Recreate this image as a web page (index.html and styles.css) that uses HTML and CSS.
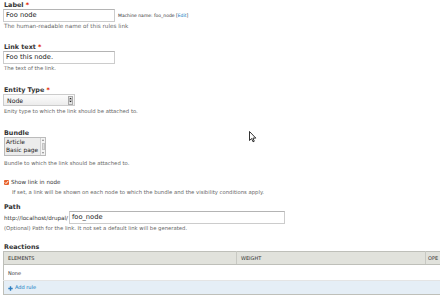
FILE: index.html
```html
<!DOCTYPE html>
<html>
<head>
<meta charset="utf-8">
<link rel="stylesheet" href="styles.css">
</head>
<body>
<div class="page">
  <div class="item item-label">
    <div class="label">Label <span class="req">*</span></div>
    <div class="row">
      <div class="input w-short">Foo node</div>
      <span class="machine">Machine name: foo_node [<a class="link">Edit</a>]</span>
    </div>
    <div class="desc desc-first">The human-readable name of this rules link</div>
  </div>

  <div class="item item-linktext">
    <div class="label">Link text <span class="req">*</span></div>
    <div class="input w-short">Foo this node.</div>
    <div class="desc">The text of the link.</div>
  </div>

  <div class="item item-entity">
    <div class="label">Entity Type <span class="req">*</span></div>
    <div class="select"><span class="select-val">Node</span><span class="select-btn"><svg width="4" height="8" viewBox="0 0 4 8"><path d="M0 3 L2 1 L4 3 Z M0 5 L4 5 L2 7 Z" fill="#222"/></svg></span></div>
    <div class="desc">Enity type to which the link should be attached to.</div>
  </div>

  <div class="item item-bundle">
    <div class="label">Bundle</div>
    <div class="listbox">
      <div class="options"><div>Article</div><div>Basic page</div></div>
      <div class="scroll"><span class="arr up"></span><span class="thumb"></span><span class="arr down"></span></div>
    </div>
    <div class="desc desc-bundle">Bundle to which the link should be attached to.</div>
  </div>

  <div class="item item-check">
    <div class="check-row"><span class="checkbox"><svg width="5" height="5" viewBox="0 0 5 5"><path d="M0.8 2.4 L2 3.6 L4.2 1" stroke="#fff" stroke-width="1" fill="none"/></svg></span><span class="check-label">Show link in node</span></div>
    <div class="desc desc-check">If set, a link will be shown on each node to which the bundle and the visibility conditions apply.</div>
  </div>

  <div class="item item-path">
    <div class="label">Path</div>
    <div class="row">
      <span class="prefix">http://localhost/drupal/</span>
      <div class="input w-long">foo_node</div>
    </div>
    <div class="desc">(Optional) Path for the link. It not set a default link will be generated.</div>
  </div>

  <div class="item item-reactions">
    <div class="label">Reactions</div>
    <table class="rules">
      <thead>
        <tr><th class="c1">ELEMENTS</th><th class="c2">WEIGHT</th><th class="c3">OPE</th></tr>
      </thead>
      <tbody>
        <tr class="none"><td colspan="3">None</td></tr>
        <tr class="add"><td colspan="3"><span class="plus"><svg width="5" height="5" viewBox="0 0 5 5"><path d="M2.5 0.3 V4.7 M0.3 2.5 H4.7" stroke="#2f7fc1" stroke-width="1.4"/></svg></span><a class="link">Add rule</a></td></tr>
      </tbody>
    </table>
  </div>
</div>
<svg class="cursor" width="8" height="12" viewBox="0 0 8 12"><path d="M0.5 0.5 L0.5 9.5 L2.6 7.6 L4 10.8 L5.3 10.2 L3.9 7.1 L6.8 7.1 Z" fill="#fff" stroke="#000" stroke-width="0.8" stroke-linejoin="round"/></svg>
</body>
</html>
```

FILE: styles.css
```css
html, body {
  margin: 0;
  padding: 0;
  background: #fff;
  overflow: hidden;
  width: 440px;
  height: 295px;
}
body {
  font-family: "DejaVu Sans", "Liberation Sans", sans-serif;
  color: #333;
  position: relative;
}
.page {
  padding: 1px 0 0 3px;
  width: 437px;
  overflow: hidden;
}
.item {
  margin-bottom: 12px;
}
.label {
  font-weight: bold;
  font-size: 6.4px;
  line-height: 8px;
  height: 8px;
  padding-left: 1px;
  color: #333;
}
.req {
  color: #e32700;
}
.row {
  display: flex;
  align-items: center;
}
.input {
  box-sizing: border-box;
  height: 13px;
  border: 1px solid #ccc;
  border-top-color: #b4b4b4;
  background: #fff;
  font-size: 6.7px;
  line-height: 11px;
  padding-left: 2px;
  color: #222;
}
.w-short { width: 112px; }
.w-long { width: 216px; }
.machine {
  font-size: 4.5px;
  margin-left: 3px;
  color: #333;
}
.link {
  color: #0074bd;
}
.desc {
  font-size: 5.3px;
  line-height: 8px;
  color: #666;
  padding-left: 1px;
  margin-top: 0;
  white-space: nowrap;
}
.desc-first { font-size: 5.7px; }
.item-label { margin-bottom: 13px; }
.item-linktext { margin-bottom: 14px; }
.item-entity { margin-bottom: 14px; }
.select {
  box-sizing: border-box;
  width: 72px;
  height: 12px;
  border: 1px solid #ccc;
  background: linear-gradient(#fcfcfc, #ececec);
  display: flex;
  align-items: center;
  justify-content: space-between;
  font-size: 6.2px;
  color: #222;
  margin-bottom: 1px;
}
.select-val { padding-left: 3px; }
.select-btn {
  width: 5px;
  height: 9px;
  margin-right: 1px;
  border: 1px solid #aaa;
  background: #e6e6e6;
  display: flex;
  align-items: center;
  justify-content: center;
  box-sizing: border-box;
}
.select-btn svg { width: 3px; height: 6px; }
.listbox {
  box-sizing: border-box;
  width: 42px;
  height: 19px;
  margin-left: 1px;
  border: 1px solid #bbb;
  background: #ececec;
  display: flex;
}
.options {
  flex: 1;
  font-size: 5.9px;
  line-height: 8px;
  color: #222;
  padding-left: 1px;
  white-space: nowrap;
  overflow: hidden;
}
.scroll {
  width: 5px;
  flex: none;
  border-left: 1px solid #d0d0d0;
  background: #f4f4f4;
  display: flex;
  flex-direction: column;
  align-items: center;
  justify-content: space-between;
  padding: 1px 0;
  box-sizing: border-box;
}
.arr {
  width: 0;
  height: 0;
  border-left: 1.5px solid transparent;
  border-right: 1.5px solid transparent;
}
.arr.up { border-bottom: 2px solid #888; }
.arr.down { border-top: 2px solid #888; }
.thumb {
  width: 3px;
  height: 7px;
  background: #ddd;
  border: 1px solid #c4c4c4;
  box-sizing: border-box;
}
.desc-bundle { margin-top: 3px; }
.item-bundle { margin-bottom: 11px; }
.check-row {
  display: flex;
  align-items: center;
  height: 8px;
  padding-left: 1px;
}
.checkbox {
  width: 5px;
  height: 5px;
  background: #e8632d;
  border-radius: 1px;
  display: inline-flex;
  margin-right: 2px;
}
.check-label {
  font-size: 5.6px;
  color: #333;
}
.desc-check {
  padding-left: 9px;
  margin-top: 2px;
}
.item-check { margin-bottom: 7px; }
.prefix {
  font-size: 5.6px;
  color: #333;
  padding-left: 1px;
  margin-right: 1px;
}
.item-path { margin-bottom: 11px; }
.rules {
  border-collapse: collapse;
  width: 450px;
  margin-top: 0;
  font-size: 5px;
  border: 1px solid #bebfb9;
  border-right: none;
}
.rules th {
  background: #e1e2dc;
  text-align: left;
  font-weight: normal;
  color: #333;
  height: 13px;
  padding: 0 0 0 4px;
  border-bottom: 1px solid #bebfb9;
  box-sizing: border-box;
  white-space: nowrap;
}
.rules th + th {
  border-left: 1px solid #c8c9c3;
}
.rules th.c1 { width: 233px; }
.rules th.c2 { width: 189px; }
.rules th.c3 { padding-left: 2px; }
.rules td {
  padding: 0 0 0 4px;
  color: #333;
}
.rules tr.none td {
  height: 15px;
  background: #fff;
  border-bottom: 1px solid #e4e4e4;
}
.rules tr.add td {
  height: 13px;
  background: #e5eef6;
}
.plus {
  display: inline-block;
  vertical-align: middle;
  margin-right: 2px;
  line-height: 0;
}
.cursor {
  position: absolute;
  left: 249px;
  top: 131px;
}
```
